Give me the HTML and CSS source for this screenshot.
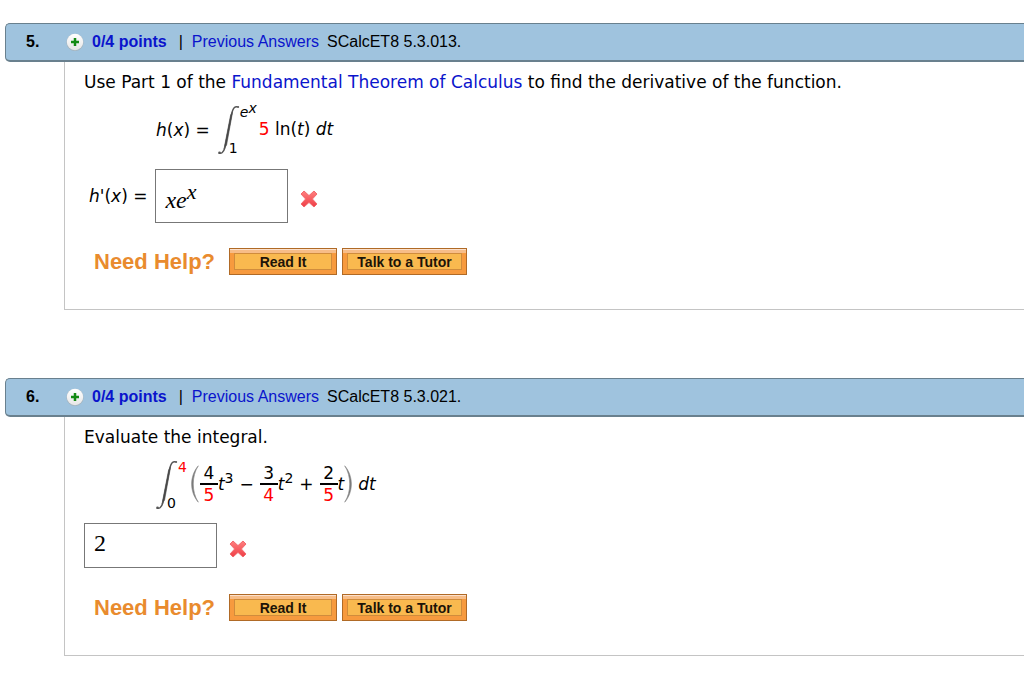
FILE: index.html
```html
<!doctype html>
<html lang="en">
<head>
	<meta charset="utf-8">
	<title>Previous Answers</title>
	<link rel="stylesheet" href="styles.css">
</head>
<body>
	<!-- shared drawings -->
	<svg class="defs" width="0" height="0" aria-hidden="true">
		<defs>
			<linearGradient id="plusBg" x1="0" y1="0" x2="0" y2="1">
				<stop offset="0" stop-color="#ffffff"/>
				<stop offset="1" stop-color="#e6e6e6"/>
			</linearGradient>
			<linearGradient id="wrongBg" x1="0" y1="0" x2="0" y2="1">
				<stop offset="0" stop-color="#ff8080"/>
				<stop offset="1" stop-color="#ef3e46"/>
			</linearGradient>
		</defs>
		<symbol id="plus" viewBox="0 0 18 18">
			<circle cx="9" cy="9.4" r="8.6" fill="#a4b4be"/>
			<circle cx="9" cy="9" r="8.2" fill="url(#plusBg)"/>
			<path d="M9 5v8M5 9h8" stroke="#138a13" stroke-width="2.5"/>
		</symbol>
		<symbol id="wrong" viewBox="0 0 18 18">
			<path d="M4 1 9 5.6 14 1 17 4 12.4 9 17 14 14 17 9 12.4 4 17 1 14 5.6 9 1 4Z" fill="url(#wrongBg)" stroke="#f26a6e" stroke-width="1" stroke-linejoin="round"/>
		</symbol>
		<symbol id="integral" viewBox="0 0 22 50">
			<path d="M.8 48C3 49 5.3 48 6.8 43L13.8 8C15.2 2.5 17 .8 20.5 2" fill="none" stroke="#555" stroke-width="1.5"/>
			<path d="M6 44 12.6 10 14.6 7 8.6 40Z" fill="#444" stroke="#555" stroke-width=".6"/>
			<circle cx="1.5" cy="47.8" r="1.3" fill="#555"/>
			<circle cx="20.2" cy="2" r="1" fill="#666"/>
		</symbol>
		<symbol id="paren" viewBox="0 0 9 38">
			<path d="M8.3.8C-.6 11-.6 27 8.3 37.2C1.6 27 1.6 11 8.3.8Z" fill="#777" stroke="#888" stroke-width=".6"/>
		</symbol>
	</svg>

	<section class="question">
		<header class="bar">
			<span class="number">5.</span>
			<svg class="plus" aria-hidden="true"><use href="#plus"/></svg>
			<a class="points" href="#">0/4 points</a>
			<span class="divider">|</span>
			<a class="previous" href="#">Previous Answers</a>
			<span>SCalcET8 5.3.013.</span>
		</header>
		<div class="content">
			<p>Use Part 1 of the <a href="#">Fundamental Theorem of Calculus</a> to find the derivative of the function.</p>
			<div class="formula">
				<span class="lead"><i>h</i>(<i>x</i>) =</span>
				<svg class="integral" aria-hidden="true"><use href="#integral"/></svg>
				<span class="limits">
					<span class="upper"><i>e</i><sup><i>x</i></sup></span>
					<span>1</span>
				</span>
				<span class="integrand"><span class="value">5</span> ln(<i>t</i>) <i>dt</i></span>
			</div>
			<div class="answer prime">
				<span id="label5" class="label"><i>h'</i>(<i>x</i>) =</span>
				<div class="box tall" role="textbox" contenteditable="true" aria-labelledby="label5"><i>xe</i><sup><i>x</i></sup></div>
				<svg class="wrong" role="img" aria-label="Incorrect"><use href="#wrong"/></svg>
			</div>
			<div class="help">
				<strong>Need Help?</strong>
				<button type="button" class="read">Read It</button>
				<button type="button" class="tutor">Talk to a Tutor</button>
			</div>
		</div>
	</section>

	<section class="question">
		<header class="bar">
			<span class="number">6.</span>
			<svg class="plus" aria-hidden="true"><use href="#plus"/></svg>
			<a class="points" href="#">0/4 points</a>
			<span class="divider">|</span>
			<a class="previous" href="#">Previous Answers</a>
			<span>SCalcET8 5.3.021.</span>
		</header>
		<div class="content">
			<p><label for="answer6">Evaluate the integral.</label></p>
			<div class="formula">
				<svg class="integral" aria-hidden="true"><use href="#integral"/></svg>
				<span class="limits">
					<span class="upper value">4</span>
					<span>0</span>
				</span>
				<span class="group">
					<svg class="paren" aria-hidden="true"><use href="#paren"/></svg>
					<span class="fraction"><span>4</span><span class="value">5</span></span>
					<span><i>t</i><sup>3</sup></span>
					<span class="sign">−</span>
					<span class="fraction"><span>3</span><span class="value">4</span></span>
					<span><i>t</i><sup>2</sup></span>
					<span class="sign">+</span>
					<span class="fraction"><span>2</span><span class="value">5</span></span>
					<span><i>t</i></span>
					<svg class="paren close" aria-hidden="true"><use href="#paren"/></svg>
					<i>dt</i>
				</span>
			</div>
			<div class="answer">
				<input id="answer6" class="box" type="text" value="2">
				<svg class="wrong" role="img" aria-label="Incorrect"><use href="#wrong"/></svg>
			</div>
			<div class="help">
				<strong>Need Help?</strong>
				<button type="button" class="read">Read It</button>
				<button type="button" class="tutor">Talk to a Tutor</button>
			</div>
		</div>
	</section>
</body>
</html>
```
FILE: styles.css
```css
body {
	margin: 23px 0 0 5px;
	background: #fff;
	color: #000;
	font-family: Verdana, "DejaVu Sans", sans-serif;
	font-size: 17px;
	overflow-x: hidden;
}

a {
	color: #0a14cc;
	text-decoration: none;
}

.defs {
	display: block;
}

.question + .question {
	margin-top: 68px;
}

/* blue title bar */
.bar {
	display: flex;
	align-items: center;
	box-sizing: border-box;
	height: 39px;
	padding-left: 20px;
	border: 1px solid #69808e;
	border-bottom-width: 2px;
	border-right: 0;
	border-radius: 5px 0 0 5px;
	background: #9fc3de;
	font-family: Arial, "Liberation Sans", sans-serif;
	font-size: 16px;
}

.number {
	width: 40px;
	font-weight: bold;
}

.plus {
	width: 18px;
	height: 18px;
	margin-right: 8px;
}

.points {
	font-weight: bold;
}

.divider {
	margin: 0 9px 0 12px;
}

.previous {
	margin-right: 8px;
}

.content {
	margin-left: 59px;
	padding: 8px 0 34px 19px;
	border-left: 1px solid #c4c4c4;
	border-bottom: 1px solid #c4c4c4;
}

p {
	margin: 0;
	line-height: 24px;
}

/* math */
.formula {
	display: flex;
	align-items: center;
	height: 50px;
	margin: 11px 0 12px 72px;
}

.formula sup {
	font-size: 14px;
	line-height: 0;
}

.lead {
	margin-right: 8px;
}

.integral {
	width: 22px;
	height: 50px;
}

.limits {
	display: flex;
	flex-direction: column;
	justify-content: space-between;
	height: 50px;
	margin-left: -11px;
	font-size: 14px;
	line-height: 14px;
}

.upper {
	padding-left: 11px;
}

.upper sup {
	vertical-align: 4px;
}

.value {
	color: #f00;
}

.integrand {
	margin: 0 0 2px 2px;
}

.group {
	display: flex;
	align-items: center;
	margin-bottom: 3px;
}

.paren {
	width: 9px;
	height: 38px;
	margin: 0 1px 0 3px;
}

.close {
	margin: 0 5px 0 0;
	transform: scaleX(-1);
}

.fraction {
	display: flex;
	flex-direction: column;
	width: 18px;
	text-align: center;
	line-height: 20px;
}

.fraction span:first-child {
	border-bottom: 2px solid #000;
}

.sign {
	margin: 0 6px;
}

/* answer boxes */
.answer {
	display: flex;
	align-items: center;
	min-height: 47px;
}

.prime {
	margin-top: 14px;
	padding-left: 5px;
}

.label {
	margin-right: 8px;
}

.box {
	box-sizing: border-box;
	width: 133px;
	height: 45px;
	padding: 0 9px 4px;
	border: 1px solid #777;
	background: #fff;
	font-family: "Times New Roman", "Liberation Serif", serif;
	font-size: 24px;
}

.tall {
	height: 54px;
	line-height: 60px;
}

.tall sup {
	font-size: 22px;
	line-height: 0;
}

.wrong {
	width: 18px;
	height: 18px;
	margin: 6px 0 0 12px;
}

/* help row */
.help {
	display: flex;
	align-items: center;
	margin-top: 25px;
	padding-left: 10px;
	font-family: Arial, "Liberation Sans", sans-serif;
}

.help strong {
	margin-right: 14px;
	color: #e98b2e;
	font-size: 22px;
	line-height: 24px;
}

.help button {
	height: 27px;
	margin-right: 5px;
	padding: 0;
	border: 1px solid #b06a26;
	background: #f9b94f;
	box-shadow: inset 0 1px #fbe0cc, inset 0 4px #f7bd88, inset 0 0 0 4px #f79a3e, inset 0 0 0 5px #d08c3c;
	color: #1c1408;
	font-family: Arial, "Liberation Sans", sans-serif;
	font-size: 14px;
	font-weight: bold;
}

.read {
	width: 108px;
}

.tutor {
	width: 125px;
}
```
